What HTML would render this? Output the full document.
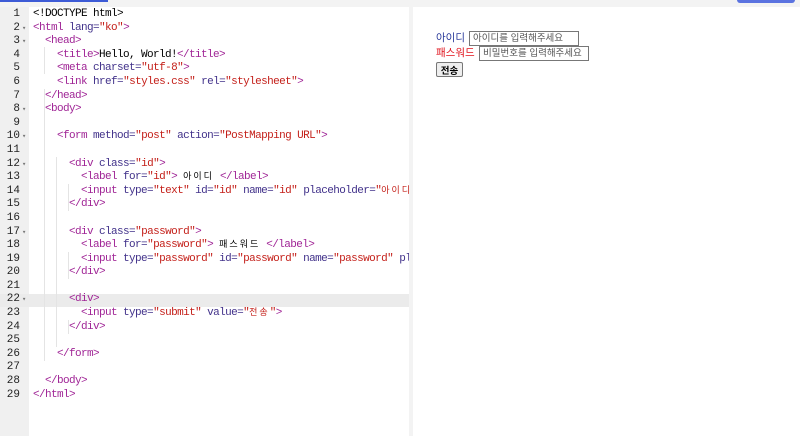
<!DOCTYPE html>
<html><head><meta charset="utf-8"><style>
body{margin:0;width:800px;height:436px;background:#f3f3f3;position:relative;overflow:hidden;font-family:"Liberation Sans","Noto Sans CJK KR",sans-serif}
.topline{position:absolute;left:0;top:0;width:108px;height:2px;background:#3d5bd6}
.btn{position:absolute;left:737px;top:-6px;width:58px;height:9px;background:#5b73e0;border-radius:3px}
.ed{position:absolute;left:0;top:7px;width:409px;height:429px;background:#fff;overflow:hidden}
.gut{position:absolute;left:0;top:0;width:29px;height:429px;background:#f0f0f0}
.hl{position:absolute;left:0;top:286.6px;width:409px;height:13.6px;background:#ebebeb}
.code{position:absolute;left:0;top:1px;font-family:"Liberation Mono","Noto Sans CJK KR",monospace;font-size:11px;letter-spacing:-0.6px;line-height:13.6px;color:#000}
.l{white-space:pre;height:13.6px;position:relative}
.n{display:inline-block;width:20px;text-align:right;color:#222;letter-spacing:0}
.f{display:inline-block;width:13px;color:#777;font-size:7px;text-align:left;padding-left:2px;box-sizing:border-box;letter-spacing:0}
.t{color:#a02596}.a{color:#41318a}.s{color:#c4201a}
.k{font-size:9px;letter-spacing:2px}
.g{position:absolute;width:1px;background:#e4e4e4}
.pv{position:absolute;left:413px;top:7px;width:387px;height:429px;background:#fff;font-size:10.5px}
input{font-family:"Liberation Sans","Noto Sans CJK KR",sans-serif}
input::placeholder{color:#555}
</style></head><body>
<div class="topline"></div><div class="btn"></div>
<div class="ed">
<div class="gut"></div>
<div class="hl"></div>
<div class="g" style="left:44px;top:82px;height:272px"></div>
<div class="g" style="left:44px;top:40px;height:27px"></div>
<div class="g" style="left:56px;top:150px;height:190px"></div>
<div class="g" style="left:68px;top:177px;height:27px"></div>
<div class="g" style="left:68px;top:245px;height:27px"></div>
<div class="g" style="left:68px;top:313px;height:14px"></div>
<div class="code">
<div class="l"><span class="n">1</span><span class="f"> </span>&lt;!DOCTYPE html&gt;</div>
<div class="l"><span class="n">2</span><span class="f">▾</span><span class="t">&lt;html</span> <span class="a">lang=</span><span class="s">"ko"</span><span class="t">&gt;</span></div>
<div class="l"><span class="n">3</span><span class="f">▾</span>  <span class="t">&lt;head&gt;</span></div>
<div class="l"><span class="n">4</span><span class="f"> </span>    <span class="t">&lt;title&gt;</span>Hello, World!<span class="t">&lt;/title&gt;</span></div>
<div class="l"><span class="n">5</span><span class="f"> </span>    <span class="t">&lt;meta</span> <span class="a">charset=</span><span class="s">"utf-8"</span><span class="t">&gt;</span></div>
<div class="l"><span class="n">6</span><span class="f"> </span>    <span class="t">&lt;link</span> <span class="a">href=</span><span class="s">"styles.css"</span> <span class="a">rel=</span><span class="s">"stylesheet"</span><span class="t">&gt;</span></div>
<div class="l"><span class="n">7</span><span class="f"> </span>  <span class="t">&lt;/head&gt;</span></div>
<div class="l"><span class="n">8</span><span class="f">▾</span>  <span class="t">&lt;body&gt;</span></div>
<div class="l"><span class="n">9</span><span class="f"> </span></div>
<div class="l"><span class="n">10</span><span class="f">▾</span>    <span class="t">&lt;form</span> <span class="a">method=</span><span class="s">"post"</span> <span class="a">action=</span><span class="s">"PostMapping URL"</span><span class="t">&gt;</span></div>
<div class="l"><span class="n">11</span><span class="f"> </span></div>
<div class="l"><span class="n">12</span><span class="f">▾</span>      <span class="t">&lt;div</span> <span class="a">class=</span><span class="s">"id"</span><span class="t">&gt;</span></div>
<div class="l"><span class="n">13</span><span class="f"> </span>        <span class="t">&lt;label</span> <span class="a">for=</span><span class="s">"id"</span><span class="t">&gt;</span> <span class="k">아이디</span> <span class="t">&lt;/label&gt;</span></div>
<div class="l"><span class="n">14</span><span class="f"> </span>        <span class="t">&lt;input</span> <span class="a">type=</span><span class="s">"text"</span> <span class="a">id=</span><span class="s">"id"</span> <span class="a">name=</span><span class="s">"id"</span> <span class="a">placeholder=</span><span class="s">"<span class="k">아이디</span></span></div>
<div class="l"><span class="n">15</span><span class="f"> </span>      <span class="t">&lt;/div&gt;</span></div>
<div class="l"><span class="n">16</span><span class="f"> </span></div>
<div class="l"><span class="n">17</span><span class="f">▾</span>      <span class="t">&lt;div</span> <span class="a">class=</span><span class="s">"password"</span><span class="t">&gt;</span></div>
<div class="l"><span class="n">18</span><span class="f"> </span>        <span class="t">&lt;label</span> <span class="a">for=</span><span class="s">"password"</span><span class="t">&gt;</span> <span class="k">패스워드</span> <span class="t">&lt;/label&gt;</span></div>
<div class="l"><span class="n">19</span><span class="f"> </span>        <span class="t">&lt;input</span> <span class="a">type=</span><span class="s">"password"</span> <span class="a">id=</span><span class="s">"password"</span> <span class="a">name=</span><span class="s">"password"</span> <span class="a">pl</span></div>
<div class="l"><span class="n">20</span><span class="f"> </span>      <span class="t">&lt;/div&gt;</span></div>
<div class="l"><span class="n">21</span><span class="f"> </span></div>
<div class="l"><span class="n">22</span><span class="f">▾</span>      <span class="t">&lt;div&gt;</span></div>
<div class="l"><span class="n">23</span><span class="f"> </span>        <span class="t">&lt;input</span> <span class="a">type=</span><span class="s">"submit"</span> <span class="a">value=</span><span class="s">"<span class="k">전송</span>"</span><span class="t">&gt;</span></div>
<div class="l"><span class="n">24</span><span class="f"> </span>      <span class="t">&lt;/div&gt;</span></div>
<div class="l"><span class="n">25</span><span class="f"> </span></div>
<div class="l"><span class="n">26</span><span class="f"> </span>    <span class="t">&lt;/form&gt;</span></div>
<div class="l"><span class="n">27</span><span class="f"> </span></div>
<div class="l"><span class="n">28</span><span class="f"> </span>  <span class="t">&lt;/body&gt;</span></div>
<div class="l"><span class="n">29</span><span class="f"> </span><span class="t">&lt;/html&gt;</span></div>
</div>
</div>
<div class="pv">
<div style="position:absolute;left:23px;top:24px;color:#2a3a9a;line-height:15px">아이디</div>
<input style="position:absolute;left:56px;top:24px;width:110px;height:15px;padding:0 3px;font-size:9.5px;border:1px solid #777;box-sizing:border-box;margin:0" placeholder="아이디를 입력해주세요">
<div style="position:absolute;left:23px;top:39px;color:#e0101a;line-height:15px">패스워드</div>
<input style="position:absolute;left:66px;top:39px;width:110px;height:15px;padding:0 3px;font-size:9.5px;border:1px solid #777;box-sizing:border-box;margin:0" placeholder="비밀번호를 입력해주세요">
<button style="position:absolute;left:23px;top:55px;width:27px;height:15px;font-size:9.5px;padding:0;margin:0;border:1px solid #777;border-radius:2px;background:#eee;font-family:'Liberation Sans','Noto Sans CJK KR',sans-serif;font-weight:bold">전송</button>
</div>
</body></html>
